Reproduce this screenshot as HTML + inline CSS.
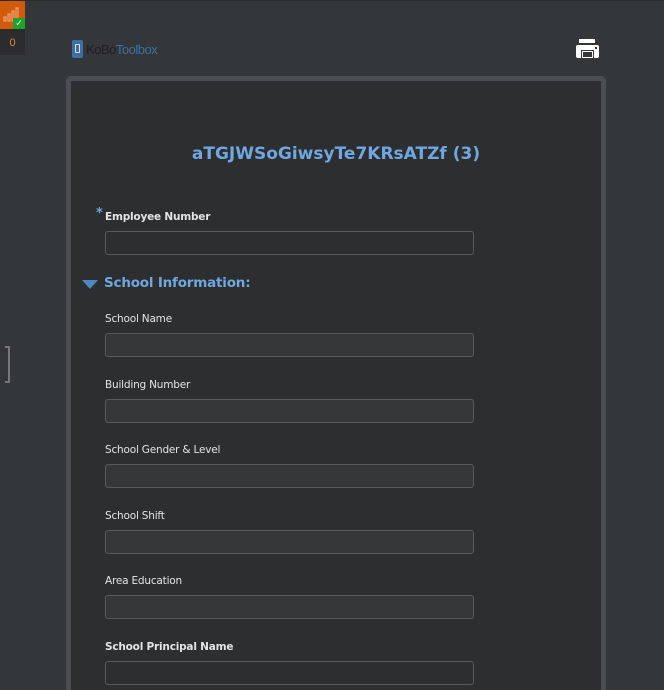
<!DOCTYPE html>
<html><head><style>
*{margin:0;padding:0;box-sizing:border-box}
html,body{width:664px;height:690px;overflow:hidden}
body{background:#343739;font-family:"Liberation Sans","DejaVu Sans",sans-serif;position:relative}
.topline{position:absolute;left:0;top:0;width:664px;height:1px;background:#2a2c2e}
.w1{position:absolute;left:0;top:1px;width:25px;height:28px;background:#d25a0c}
.chk{position:absolute;left:13px;top:17px;width:12px;height:11px;background:#1aa52a;color:#fff;font-size:9px;line-height:11px;text-align:center;font-weight:bold}
.w2{position:absolute;left:0;top:29px;width:25px;height:26px;background:#2b2c2e;color:#e0893a;font-size:11px;text-align:center;line-height:28px}
.brk{position:absolute;left:5px;top:346px;width:5px;height:37px;border:2px solid #777;border-left:none}
.logo{position:absolute;left:72px;top:40px;font-size:13px;letter-spacing:-0.5px}
.panel{position:absolute;left:66px;top:76px;width:540px;height:640px;border:5px solid #4b4e51;border-radius:5px;background:#2d2e30}
h1{position:absolute;left:0;width:530px;top:63px;text-align:center;color:#6fa7e0;font-size:17px;font-weight:bold;font-family:"DejaVu Sans",sans-serif}
.lbl{position:absolute;left:34px;color:#e4e4e4;font-size:10.5px;font-family:"DejaVu Sans",sans-serif;letter-spacing:-0.2px}
.b{font-weight:bold}
.in{position:absolute;left:34px;width:369px;height:24px;border:1px solid #58595b;border-radius:3px;background:#363738}
.in.e{background:#2d2e30}
.sec{position:absolute;left:33px;top:194px;color:#6fa7e0;font-size:13.5px;font-weight:bold;font-family:"DejaVu Sans",sans-serif;letter-spacing:-0.2px}
.tri{position:absolute;left:11px;top:199px;width:0;height:0;border-left:8px solid transparent;border-right:8px solid transparent;border-top:9px solid #4f86c0}
</style></head><body>
<div class="topline"></div>
<div class="w1"><svg width="25" height="20" style="position:absolute;left:3px;top:5px"><g fill="none" stroke="#f0a070" stroke-width="1.2"><rect x="1" y="11" width="2" height="4"/><rect x="5" y="8" width="2" height="7"/><rect x="9" y="5" width="2" height="10"/><rect x="13" y="2" width="2" height="13"/></g></svg><div class="chk">✓</div></div>
<div class="w2">0</div>
<div class="brk"></div>
<div class="logo"><span style="display:inline-block;width:11px;height:18px;background:#3d6fa3;border-radius:2px;vertical-align:-4px;position:relative"><span style="position:absolute;left:3px;top:4px;width:5px;height:9px;border:1px solid #dde;border-radius:1px"></span></span><span style="color:#1e2022"> KoBo</span><span style="color:#3d6fa3">Toolbox</span></div>
<svg style="position:absolute;left:575px;top:38px" width="26" height="24"><rect x="4" y="1" width="16" height="4" fill="#fff"/><rect x="1" y="7" width="23" height="13" rx="2" fill="#fff"/><rect x="6" y="12" width="13" height="9" fill="#343739"/><rect x="7" y="13" width="11" height="7" fill="#fff"/><rect x="8" y="14" width="9" height="5" fill="#343739"/><rect x="20" y="9" width="2" height="2" fill="#343739"/></svg>
<div class="panel">
<h1>aTGJWSoGiwsyTe7KRsATZf (3)</h1>
<div class="lbl b" style="top:130px;left:34px"><span style="position:absolute;left:-9px;top:-5px;color:#6fa7e0;font-size:13px">*</span>Employee Number</div>
<div class="in e" style="top:150px"></div>
<div class="tri"></div>
<div class="sec">School Information:</div>
<div class="lbl" style="top:232px">School Name</div>
<div class="in" style="top:252px"></div>
<div class="lbl" style="top:298px">Building Number</div>
<div class="in" style="top:318px"></div>
<div class="lbl" style="top:363px">School Gender &amp; Level</div>
<div class="in" style="top:383px"></div>
<div class="lbl" style="top:429px">School Shift</div>
<div class="in" style="top:449px"></div>
<div class="lbl" style="top:494px">Area Education</div>
<div class="in" style="top:514px"></div>
<div class="lbl b" style="top:560px">School Principal Name</div>
<div class="in e" style="top:580px"></div>
</div>
</body></html>
